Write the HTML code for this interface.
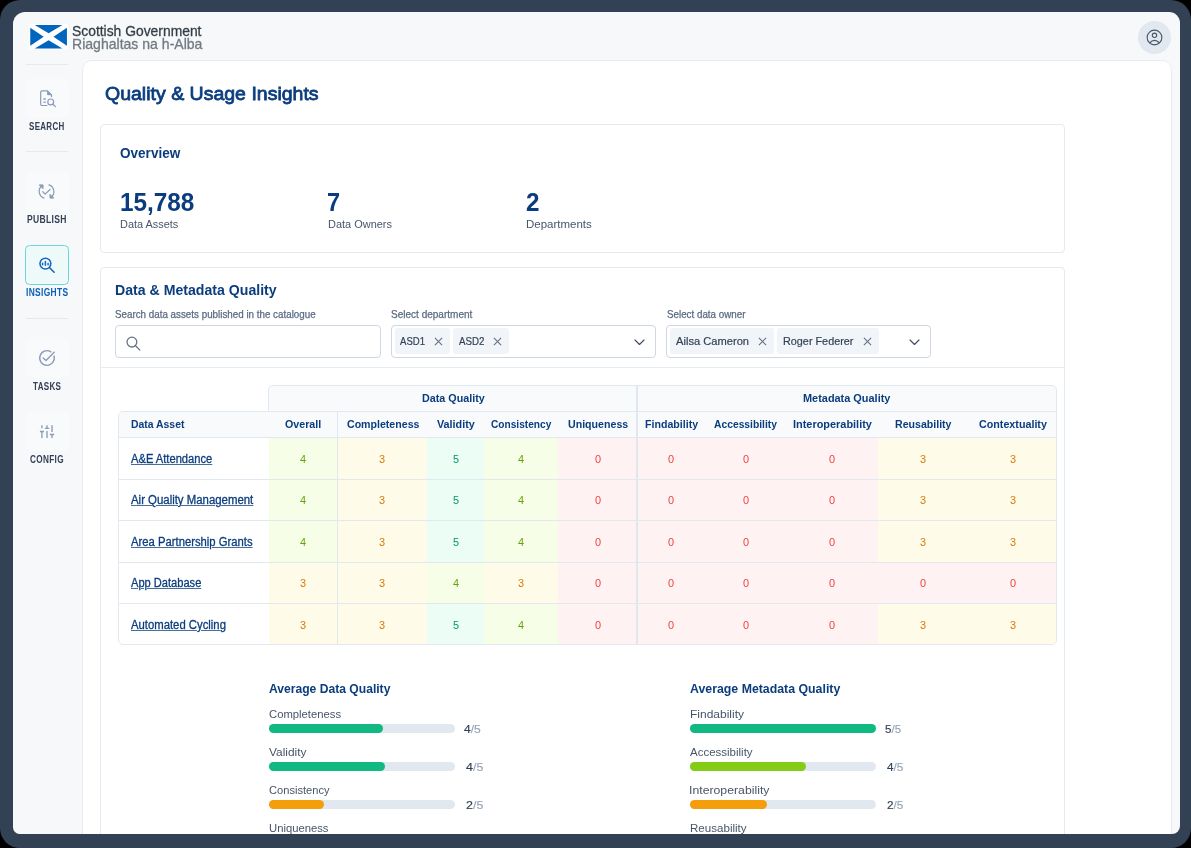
<!DOCTYPE html>
<html lang="en">
<head>
<meta charset="utf-8">
<title>Quality &amp; Usage Insights</title>
<style>
*{box-sizing:border-box;margin:0;padding:0}
html,body{width:1191px;height:848px;overflow:hidden;background:#000}
body{font-family:"Liberation Sans",sans-serif;color:#0b3d7e;position:relative}
.abs{position:absolute}
#frame{position:absolute;left:0;top:0;width:1191px;height:848px;background:#334155;border-radius:20px}
#app{position:absolute;left:13px;top:12px;width:1167px;height:822px;background:#f7f8fa;border-radius:12px 11px 8px 6.500px;overflow:hidden}
#c{position:absolute;left:-13px;top:-12px;width:1191px;height:848px;will-change:transform}
#main{position:absolute;left:82px;top:60px;width:1090px;height:800px;background:#fff;border:1px solid #e8ecf2;border-radius:10px}
.t{position:absolute;white-space:nowrap;line-height:1;transform-origin:0 0}
.card{position:absolute;border:1px solid #e5e9f0;border-radius:4px;background:#fff}
.inp{position:absolute;height:33px;border:1px solid #cfd7e2;border-radius:4px;background:#fff}
.chip{position:absolute;height:26px;background:#f1f5f9;border-radius:3px}
.nav{position:absolute;left:25.5px;width:43px;height:39px;border-radius:5px;background:#f9fafc}
.sep{position:absolute;left:26px;width:42px;height:1px;background:#e5e9ef}
.u{text-decoration:underline;text-underline-offset:1.2px;text-decoration-thickness:.8px;text-decoration-color:rgba(11,61,126,.75)}
.track{position:absolute;height:9px;border-radius:5px;background:#e2e8f0}
.fill{position:absolute;left:0;top:0;height:9px;border-radius:5px}
i{font-style:normal}
</style>
</head>
<body>
<div id="frame"></div>
<div id="app"><div id="c">
<svg class="abs" style="left:28.600px;top:24.200px" width="39.200" height="25.500" viewBox="0 0 40 25.500" preserveAspectRatio="none">
<rect width="40" height="25.500" fill="#fff"/>
<polygon points="5.9,1.1 34.100,1.1 20,9.300" fill="#0065bd"/>
<polygon points="5.9,24.400 34.100,24.400 20,16.200" fill="#0065bd"/>
<polygon points="1.3,3.800 1.300,21.700 15,12.750" fill="#0065bd"/>
<polygon points="38.700,3.800 38.700,21.700 25,12.750" fill="#0065bd"/>
</svg>
<div class="t" style="left:72.00px;top:24.00px;font-size:14.3px;color:#333e48;-webkit-text-stroke:0.3px currentColor;transform:scaleX(0.9699);">Scottish Government</div>
<div class="t" style="left:71.82px;top:37.00px;font-size:14.3px;color:#727a82;-webkit-text-stroke:0.3px currentColor;transform:scaleX(0.9827);">Riaghaltas na h-Alba</div>
<div class="abs" style="left:1138px;top:21.200px;width:32.600px;height:32.800px;border-radius:50%;background:#e2e8f0"></div>
<svg class="abs" style="left:1145.700px;top:29.200px" width="17" height="17" viewBox="0 0 17 17" fill="none" stroke="#475569" stroke-width="1.1">
<circle cx="8.5" cy="8.500" r="7.350"/><circle cx="8.5" cy="6.300" r="2.200"/><path d="M3.500 14Q8.500 8.800 13.500 14"/></svg>
<div class="sep" style="top:64px"></div>
<div class="nav" style="top:78.500px"></div>
<div class="sep" style="top:151px"></div>
<div class="nav" style="top:172px"></div>
<div class="nav" style="left:25.200px;top:245px;width:43.700px;height:40px;background:#eef9fa;border:1.500px solid #6fd3da;border-radius:4.500px"></div>
<div class="sep" style="top:318px"></div>
<div class="nav" style="top:339px"></div>
<div class="nav" style="top:412px"></div>
<div class="t" style="left:29.00px;top:122.00px;font-size:10px;font-weight:700;color:#334155;letter-spacing:0.4px;transform:scaleX(0.7976);">SEARCH</div>
<div class="t" style="left:27.40px;top:215.00px;font-size:10px;font-weight:700;color:#334155;letter-spacing:0.4px;transform:scaleX(0.8531);">PUBLISH</div>
<div class="t" style="left:26.00px;top:288.00px;font-size:10px;font-weight:700;color:#0b5fb8;letter-spacing:0.4px;transform:scaleX(0.8420);">INSIGHTS</div>
<div class="t" style="left:32.80px;top:382.00px;font-size:10px;font-weight:700;color:#334155;letter-spacing:0.4px;transform:scaleX(0.8039);">TASKS</div>
<div class="t" style="left:30.00px;top:455.00px;font-size:10px;font-weight:700;color:#334155;letter-spacing:0.4px;transform:scaleX(0.8198);">CONFIG</div>
<svg class="abs" style="left:38px;top:89px" width="19" height="19" viewBox="0 0 19 19" fill="none" stroke="#8b9bb4" stroke-width="1.2" stroke-linecap="round" stroke-linejoin="round">
<path d="M8.900 16.500H3.900a1.200 1.200 0 0 1-1.200-1.200V3a1.200 1.200 0 0 1 1.200-1.200h5.400l4.200 4.200v1.600"/><path d="M9.600 2.200v3.500h3.500z" fill="#8b9bb4" stroke-width="1"/>
<path d="M5.400 10h2.400M5.400 13.200h2.400" stroke-linecap="butt" stroke-width="1.300"/><circle cx="12.700" cy="12.900" r="2.900"/><path d="M14.900 15.100l2.400 2.400"/></svg>
<svg class="abs" style="left:37.150px;top:181.500px" width="19" height="19" viewBox="0 0 19 19" fill="none" stroke="#8b9bb4" stroke-width="1.2" stroke-linecap="round" stroke-linejoin="round">
<path d="M7 16.100A7.100 7.100 0 0 1 4.300 4.300"/><path d="M2.600 2.900h3.400v3.400z" fill="#8b9bb4" stroke-width="1"/><path d="M12 2.900a7.100 7.100 0 0 1 2.700 11.800"/><path d="M16.400 16.100H13v-3.400z" fill="#8b9bb4" stroke-width="1"/>
<path d="M5.700 9.700l2.500 2.400 4.800-4.600"/></svg>
<svg class="abs" style="left:37px;top:254.500px" width="20" height="20" viewBox="0 0 20 20" fill="none" stroke="#1565c0" stroke-width="1.550" stroke-linecap="round">
<circle cx="8.400" cy="8.600" r="5.450"/><path d="M12.600 12.700l4.500 4.500"/><path d="M5.600 8.300v1.500M8.400 6.600v3.600M11.100 8.600v1.200" stroke-width="1.500"/></svg>
<svg class="abs" style="left:37px;top:348px" width="20" height="20" viewBox="0 0 20 20" fill="none" stroke="#8b9bb4" stroke-width="1.350" stroke-linecap="round" stroke-linejoin="round">
<path d="M17.050 8.050A7.300 7.300 0 1 1 13.900 3.820"/><path d="M6.200 10l2.800 2.500 8.200-8.200"/></svg>
<svg class="abs" style="left:39px;top:424px" width="16" height="16" viewBox="0 0 16 16" fill="none" stroke="#8b9bb4" stroke-width="1.350" stroke-linecap="butt">
<path d="M2.900 1.300v3M.9 7.500h4.050M2.900 7.500v6.400M8 1.300v3M5.900 4.300h4.300M8 7.100v6.800M13 1.300v6.600M10.900 10.500h4.200M13 10.500v3.400"/></svg>
<div id="main"></div>
<div class="t" style="left:104.60px;top:84.00px;font-size:19.2px;-webkit-text-stroke:0.8px currentColor;transform:scaleX(1.0167);">Quality &amp; Usage Insights</div>
<div class="card" style="left:100px;top:124px;width:965px;height:129px"></div>
<div class="t" style="left:119.50px;top:146.00px;font-size:14.3px;font-weight:700;transform:scaleX(0.9479);">Overview</div>
<div class="t" style="left:119.83px;top:190.00px;font-size:25px;font-weight:700;transform:scaleX(0.9727);">15,788</div>
<div class="t" style="left:120.20px;top:218.00px;font-size:11.6px;color:#475569;transform:scaleX(0.9425);">Data Assets</div>
<div class="t" style="left:327.36px;top:190.00px;font-size:25px;font-weight:700;transform:scaleX(0.9417);">7</div>
<div class="t" style="left:328.30px;top:218.00px;font-size:11.6px;color:#475569;transform:scaleX(0.9461);">Data Owners</div>
<div class="t" style="left:526.00px;top:190.00px;font-size:25px;font-weight:700;transform:scaleX(0.9692);">2</div>
<div class="t" style="left:526.00px;top:218.00px;font-size:11.6px;color:#475569;transform:scaleX(0.9914);">Departments</div>
<div class="card" style="left:100px;top:267px;width:965px;height:600px"></div>
<div class="t" style="left:115.40px;top:283.00px;font-size:14.3px;font-weight:700;transform:scaleX(0.9877);">Data &amp; Metadata Quality</div>
<div class="t" style="left:115.40px;top:310.00px;font-size:10.3px;color:#5b6b80;-webkit-text-stroke:0.25px currentColor;transform:scaleX(0.9524);">Search data assets published in the catalogue</div>
<div class="t" style="left:391.20px;top:310.00px;font-size:10.3px;color:#5b6b80;-webkit-text-stroke:0.25px currentColor;transform:scaleX(0.9736);">Select department</div>
<div class="t" style="left:666.70px;top:310.00px;font-size:10.3px;color:#5b6b80;-webkit-text-stroke:0.25px currentColor;transform:scaleX(0.9518);">Select data owner</div>
<div class="inp" style="left:115px;top:325px;width:265.500px"><svg class="abs" style="left:10px;top:9.700px" width="16" height="16" viewBox="0 0 16 16" fill="none" stroke="#64748b" stroke-width="1.3" stroke-linecap="round"><circle cx="5.900" cy="6.100" r="4.900"/><path d="M9.500 9.700l4.400 4.400"/></svg></div>
<div class="inp" style="left:390.700px;top:325px;width:265.300px"></div>
<div class="inp" style="left:666.200px;top:325px;width:265.300px"></div>
<div class="chip" style="left:394.8px;top:328px;width:54.9px"></div>
<div class="t" style="left:400.10px;top:336.00px;font-size:11.8px;color:#334155;-webkit-text-stroke:0.2px currentColor;transform:scaleX(0.8131);">ASD1</div>
<svg class="abs" style="left:433.9px;top:336.8px" width="9" height="9" viewBox="0 0 9 9" stroke="#64748b" stroke-width="1.150" fill="none"><path d="M.9.900l7.200 7.200M8.100.9l-7.200 7.200"/></svg>
<div class="chip" style="left:453px;top:328px;width:55.8px"></div>
<div class="t" style="left:458.50px;top:336.00px;font-size:11.8px;color:#334155;-webkit-text-stroke:0.2px currentColor;transform:scaleX(0.8263);">ASD2</div>
<svg class="abs" style="left:493.2px;top:336.8px" width="9" height="9" viewBox="0 0 9 9" stroke="#64748b" stroke-width="1.150" fill="none"><path d="M.9.900l7.200 7.200M8.100.9l-7.200 7.200"/></svg>
<div class="chip" style="left:670.2px;top:328px;width:103.8px"></div>
<div class="t" style="left:675.70px;top:336.00px;font-size:11.8px;color:#334155;-webkit-text-stroke:0.2px currentColor;transform:scaleX(0.9440);">Ailsa Cameron</div>
<svg class="abs" style="left:757.9px;top:336.8px" width="9" height="9" viewBox="0 0 9 9" stroke="#64748b" stroke-width="1.150" fill="none"><path d="M.9.900l7.200 7.200M8.100.9l-7.200 7.200"/></svg>
<div class="chip" style="left:777.2px;top:328px;width:102.0px"></div>
<div class="t" style="left:783.00px;top:336.00px;font-size:11.8px;color:#334155;-webkit-text-stroke:0.2px currentColor;transform:scaleX(0.9181);">Roger Federer</div>
<svg class="abs" style="left:863.2px;top:336.8px" width="9" height="9" viewBox="0 0 9 9" stroke="#64748b" stroke-width="1.150" fill="none"><path d="M.9.900l7.200 7.200M8.100.9l-7.200 7.200"/></svg>
<svg class="abs" style="left:633.5px;top:338.5px" width="11" height="7" viewBox="0 0 11 7" fill="none" stroke="#3f4d63" stroke-width="1.150" stroke-linecap="round" stroke-linejoin="round"><path d="M1 1l4.500 4.500L10 1"/></svg>
<svg class="abs" style="left:909.2px;top:338.5px" width="11" height="7" viewBox="0 0 11 7" fill="none" stroke="#3f4d63" stroke-width="1.150" stroke-linecap="round" stroke-linejoin="round"><path d="M1 1l4.500 4.500L10 1"/></svg>
<div class="abs" style="left:101px;top:367px;width:963px;height:1px;background:#e8ecf2"></div>
<div class="abs" style="left:268px;top:385px;width:789px;height:60px;background:#f8fafc;border:1px solid #e2e8f0;border-radius:5px 5px 0 0"></div>
<div class="abs" style="left:118px;top:411px;width:939px;height:234px;background:#fff;border:1px solid #e2e8f0;border-radius:5px 0 5px 5px;overflow:hidden" id="tb">
<div class="abs" style="left:0;top:0;width:940px;height:25.5px;background:#f8fafc"></div>
<div class="abs" style="left:149.5px;top:25.5px;width:69.0px;height:41.5px;background:#f7fee7"></div>
<div class="abs" style="left:218.5px;top:25.5px;width:89.5px;height:41.5px;background:#fefce8"></div>
<div class="abs" style="left:308px;top:25.5px;width:57px;height:41.5px;background:#ecfdf5"></div>
<div class="abs" style="left:365px;top:25.5px;width:73.5px;height:41.5px;background:#f7fee7"></div>
<div class="abs" style="left:438.5px;top:25.5px;width:79.5px;height:41.5px;background:#fef2f2"></div>
<div class="abs" style="left:518px;top:25.5px;width:67.5px;height:41.5px;background:#fef2f2"></div>
<div class="abs" style="left:585.5px;top:25.5px;width:82.0px;height:41.5px;background:#fef2f2"></div>
<div class="abs" style="left:667.5px;top:25.5px;width:91.0px;height:41.5px;background:#fef2f2"></div>
<div class="abs" style="left:758.5px;top:25.5px;width:91.5px;height:41.5px;background:#fefce8"></div>
<div class="abs" style="left:850px;top:25.5px;width:87.5px;height:41.5px;background:#fefce8"></div>
<div class="abs" style="left:149.5px;top:67px;width:69.0px;height:41.5px;background:#f7fee7"></div>
<div class="abs" style="left:218.5px;top:67px;width:89.5px;height:41.5px;background:#fefce8"></div>
<div class="abs" style="left:308px;top:67px;width:57px;height:41.5px;background:#ecfdf5"></div>
<div class="abs" style="left:365px;top:67px;width:73.5px;height:41.5px;background:#f7fee7"></div>
<div class="abs" style="left:438.5px;top:67px;width:79.5px;height:41.5px;background:#fef2f2"></div>
<div class="abs" style="left:518px;top:67px;width:67.5px;height:41.5px;background:#fef2f2"></div>
<div class="abs" style="left:585.5px;top:67px;width:82.0px;height:41.5px;background:#fef2f2"></div>
<div class="abs" style="left:667.5px;top:67px;width:91.0px;height:41.5px;background:#fef2f2"></div>
<div class="abs" style="left:758.5px;top:67px;width:91.5px;height:41.5px;background:#fefce8"></div>
<div class="abs" style="left:850px;top:67px;width:87.5px;height:41.5px;background:#fefce8"></div>
<div class="abs" style="left:149.5px;top:108.5px;width:69.0px;height:41.5px;background:#f7fee7"></div>
<div class="abs" style="left:218.5px;top:108.5px;width:89.5px;height:41.5px;background:#fefce8"></div>
<div class="abs" style="left:308px;top:108.5px;width:57px;height:41.5px;background:#ecfdf5"></div>
<div class="abs" style="left:365px;top:108.5px;width:73.5px;height:41.5px;background:#f7fee7"></div>
<div class="abs" style="left:438.5px;top:108.5px;width:79.5px;height:41.5px;background:#fef2f2"></div>
<div class="abs" style="left:518px;top:108.5px;width:67.5px;height:41.5px;background:#fef2f2"></div>
<div class="abs" style="left:585.5px;top:108.5px;width:82.0px;height:41.5px;background:#fef2f2"></div>
<div class="abs" style="left:667.5px;top:108.5px;width:91.0px;height:41.5px;background:#fef2f2"></div>
<div class="abs" style="left:758.5px;top:108.5px;width:91.5px;height:41.5px;background:#fefce8"></div>
<div class="abs" style="left:850px;top:108.5px;width:87.5px;height:41.5px;background:#fefce8"></div>
<div class="abs" style="left:149.5px;top:150px;width:69.0px;height:41px;background:#fefce8"></div>
<div class="abs" style="left:218.5px;top:150px;width:89.5px;height:41px;background:#fefce8"></div>
<div class="abs" style="left:308px;top:150px;width:57px;height:41px;background:#f7fee7"></div>
<div class="abs" style="left:365px;top:150px;width:73.5px;height:41px;background:#fefce8"></div>
<div class="abs" style="left:438.5px;top:150px;width:79.5px;height:41px;background:#fef2f2"></div>
<div class="abs" style="left:518px;top:150px;width:67.5px;height:41px;background:#fef2f2"></div>
<div class="abs" style="left:585.5px;top:150px;width:82.0px;height:41px;background:#fef2f2"></div>
<div class="abs" style="left:667.5px;top:150px;width:91.0px;height:41px;background:#fef2f2"></div>
<div class="abs" style="left:758.5px;top:150px;width:91.5px;height:41px;background:#fef2f2"></div>
<div class="abs" style="left:850px;top:150px;width:87.5px;height:41px;background:#fef2f2"></div>
<div class="abs" style="left:149.5px;top:191px;width:69.0px;height:41.5px;background:#fefce8"></div>
<div class="abs" style="left:218.5px;top:191px;width:89.5px;height:41.5px;background:#fefce8"></div>
<div class="abs" style="left:308px;top:191px;width:57px;height:41.5px;background:#ecfdf5"></div>
<div class="abs" style="left:365px;top:191px;width:73.5px;height:41.5px;background:#f7fee7"></div>
<div class="abs" style="left:438.5px;top:191px;width:79.5px;height:41.5px;background:#fef2f2"></div>
<div class="abs" style="left:518px;top:191px;width:67.5px;height:41.5px;background:#fef2f2"></div>
<div class="abs" style="left:585.5px;top:191px;width:82.0px;height:41.5px;background:#fef2f2"></div>
<div class="abs" style="left:667.5px;top:191px;width:91.0px;height:41.5px;background:#fef2f2"></div>
<div class="abs" style="left:758.5px;top:191px;width:91.5px;height:41.5px;background:#fefce8"></div>
<div class="abs" style="left:850px;top:191px;width:87.5px;height:41.5px;background:#fefce8"></div>
<div class="abs" style="left:0;top:25.0px;width:940px;height:1px;background:#e2e8f0"></div>
<div class="abs" style="left:0;top:66.5px;width:940px;height:1px;background:#e2e8f0"></div>
<div class="abs" style="left:0;top:108.0px;width:940px;height:1px;background:#e2e8f0"></div>
<div class="abs" style="left:0;top:149.5px;width:940px;height:1px;background:#e2e8f0"></div>
<div class="abs" style="left:0;top:190.5px;width:940px;height:1px;background:#e2e8f0"></div>
<div class="abs" style="left:218px;top:0;width:1px;height:240px;background:#e2e8f0"></div>
<div class="abs" style="left:517px;top:-5px;width:2.200px;height:245px;background:#e0e7f0"></div>
</div>
<div class="abs" style="left:268.500px;top:411px;width:788px;height:1px;background:#e2e8f0"></div>
<div class="abs" style="left:636px;top:386px;width:2.200px;height:26px;background:#e0e7f0"></div>
<div class="t" style="left:421.80px;top:392.00px;font-size:11.6px;font-weight:700;transform:scaleX(0.9267);">Data Quality</div>
<div class="t" style="left:802.90px;top:392.00px;font-size:11.6px;font-weight:700;transform:scaleX(0.9419);">Metadata Quality</div>
<div class="t" style="left:131.00px;top:418.00px;font-size:11.6px;font-weight:700;transform:scaleX(0.8973);">Data Asset</div>
<div class="t" style="left:285.20px;top:418.00px;font-size:11.6px;font-weight:700;transform:scaleX(0.9208);">Overall</div>
<div class="t" style="left:346.50px;top:418.00px;font-size:11.6px;font-weight:700;transform:scaleX(0.9137);">Completeness</div>
<div class="t" style="left:436.75px;top:418.00px;font-size:11.6px;font-weight:700;transform:scaleX(0.9308);">Validity</div>
<div class="t" style="left:490.70px;top:418.00px;font-size:11.6px;font-weight:700;transform:scaleX(0.8749);">Consistency</div>
<div class="t" style="left:568.30px;top:418.00px;font-size:11.6px;font-weight:700;transform:scaleX(0.9163);">Uniqueness</div>
<div class="t" style="left:644.50px;top:418.00px;font-size:11.6px;font-weight:700;transform:scaleX(0.9159);">Findability</div>
<div class="t" style="left:714.25px;top:418.00px;font-size:11.6px;font-weight:700;transform:scaleX(0.8889);">Accessibility</div>
<div class="t" style="left:792.80px;top:418.00px;font-size:11.6px;font-weight:700;transform:scaleX(0.9419);">Interoperability</div>
<div class="t" style="left:894.80px;top:418.00px;font-size:11.6px;font-weight:700;transform:scaleX(0.9134);">Reusability</div>
<div class="t" style="left:978.60px;top:418.00px;font-size:11.6px;font-weight:700;transform:scaleX(0.9245);">Contextuality</div>
<div class="t u" style="left:130.80px;top:453.00px;font-size:12px;-webkit-text-stroke:0.3px currentColor;transform:scaleX(0.9300);">A&amp;E Attendance</div>
<div class="t" style="left:300.16px;top:454.00px;font-size:11.5px;color:#65a30d;transform:scaleX(0.9500);">4</div>
<div class="t" style="left:379.46px;top:454.00px;font-size:11.5px;color:#d97706;transform:scaleX(0.9500);">3</div>
<div class="t" style="left:452.86px;top:454.00px;font-size:11.5px;color:#059669;transform:scaleX(0.9500);">5</div>
<div class="t" style="left:518.06px;top:454.00px;font-size:11.5px;color:#65a30d;transform:scaleX(0.9500);">4</div>
<div class="t" style="left:595.16px;top:454.00px;font-size:11.5px;color:#ef4444;transform:scaleX(0.9500);">0</div>
<div class="t" style="left:668.26px;top:454.00px;font-size:11.5px;color:#ef4444;transform:scaleX(0.9500);">0</div>
<div class="t" style="left:742.96px;top:454.00px;font-size:11.5px;color:#ef4444;transform:scaleX(0.9500);">0</div>
<div class="t" style="left:829.46px;top:454.00px;font-size:11.5px;color:#ef4444;transform:scaleX(0.9500);">0</div>
<div class="t" style="left:920.26px;top:454.00px;font-size:11.5px;color:#d97706;transform:scaleX(0.9500);">3</div>
<div class="t" style="left:1009.76px;top:454.00px;font-size:11.5px;color:#d97706;transform:scaleX(0.9500);">3</div>
<div class="t u" style="left:130.80px;top:494.00px;font-size:12px;-webkit-text-stroke:0.3px currentColor;transform:scaleX(0.9498);">Air Quality Management</div>
<div class="t" style="left:300.16px;top:495.00px;font-size:11.5px;color:#65a30d;transform:scaleX(0.9500);">4</div>
<div class="t" style="left:379.46px;top:495.00px;font-size:11.5px;color:#d97706;transform:scaleX(0.9500);">3</div>
<div class="t" style="left:452.86px;top:495.00px;font-size:11.5px;color:#059669;transform:scaleX(0.9500);">5</div>
<div class="t" style="left:518.06px;top:495.00px;font-size:11.5px;color:#65a30d;transform:scaleX(0.9500);">4</div>
<div class="t" style="left:595.16px;top:495.00px;font-size:11.5px;color:#ef4444;transform:scaleX(0.9500);">0</div>
<div class="t" style="left:668.26px;top:495.00px;font-size:11.5px;color:#ef4444;transform:scaleX(0.9500);">0</div>
<div class="t" style="left:742.96px;top:495.00px;font-size:11.5px;color:#ef4444;transform:scaleX(0.9500);">0</div>
<div class="t" style="left:829.46px;top:495.00px;font-size:11.5px;color:#ef4444;transform:scaleX(0.9500);">0</div>
<div class="t" style="left:920.26px;top:495.00px;font-size:11.5px;color:#d97706;transform:scaleX(0.9500);">3</div>
<div class="t" style="left:1009.76px;top:495.00px;font-size:11.5px;color:#d97706;transform:scaleX(0.9500);">3</div>
<div class="t u" style="left:130.80px;top:536.00px;font-size:12px;-webkit-text-stroke:0.3px currentColor;transform:scaleX(0.9398);">Area Partnership Grants</div>
<div class="t" style="left:300.16px;top:537.00px;font-size:11.5px;color:#65a30d;transform:scaleX(0.9500);">4</div>
<div class="t" style="left:379.46px;top:537.00px;font-size:11.5px;color:#d97706;transform:scaleX(0.9500);">3</div>
<div class="t" style="left:452.86px;top:537.00px;font-size:11.5px;color:#059669;transform:scaleX(0.9500);">5</div>
<div class="t" style="left:518.06px;top:537.00px;font-size:11.5px;color:#65a30d;transform:scaleX(0.9500);">4</div>
<div class="t" style="left:595.16px;top:537.00px;font-size:11.5px;color:#ef4444;transform:scaleX(0.9500);">0</div>
<div class="t" style="left:668.26px;top:537.00px;font-size:11.5px;color:#ef4444;transform:scaleX(0.9500);">0</div>
<div class="t" style="left:742.96px;top:537.00px;font-size:11.5px;color:#ef4444;transform:scaleX(0.9500);">0</div>
<div class="t" style="left:829.46px;top:537.00px;font-size:11.5px;color:#ef4444;transform:scaleX(0.9500);">0</div>
<div class="t" style="left:920.26px;top:537.00px;font-size:11.5px;color:#d97706;transform:scaleX(0.9500);">3</div>
<div class="t" style="left:1009.76px;top:537.00px;font-size:11.5px;color:#d97706;transform:scaleX(0.9500);">3</div>
<div class="t u" style="left:130.80px;top:577.00px;font-size:12px;-webkit-text-stroke:0.3px currentColor;transform:scaleX(0.9243);">App Database</div>
<div class="t" style="left:300.16px;top:578.00px;font-size:11.5px;color:#d97706;transform:scaleX(0.9500);">3</div>
<div class="t" style="left:379.46px;top:578.00px;font-size:11.5px;color:#d97706;transform:scaleX(0.9500);">3</div>
<div class="t" style="left:452.86px;top:578.00px;font-size:11.5px;color:#65a30d;transform:scaleX(0.9500);">4</div>
<div class="t" style="left:518.06px;top:578.00px;font-size:11.5px;color:#d97706;transform:scaleX(0.9500);">3</div>
<div class="t" style="left:595.16px;top:578.00px;font-size:11.5px;color:#ef4444;transform:scaleX(0.9500);">0</div>
<div class="t" style="left:668.26px;top:578.00px;font-size:11.5px;color:#ef4444;transform:scaleX(0.9500);">0</div>
<div class="t" style="left:742.96px;top:578.00px;font-size:11.5px;color:#ef4444;transform:scaleX(0.9500);">0</div>
<div class="t" style="left:829.46px;top:578.00px;font-size:11.5px;color:#ef4444;transform:scaleX(0.9500);">0</div>
<div class="t" style="left:920.26px;top:578.00px;font-size:11.5px;color:#ef4444;transform:scaleX(0.9500);">0</div>
<div class="t" style="left:1009.76px;top:578.00px;font-size:11.5px;color:#ef4444;transform:scaleX(0.9500);">0</div>
<div class="t u" style="left:130.80px;top:619.00px;font-size:12px;-webkit-text-stroke:0.3px currentColor;transform:scaleX(0.9426);">Automated Cycling</div>
<div class="t" style="left:300.16px;top:620.00px;font-size:11.5px;color:#d97706;transform:scaleX(0.9500);">3</div>
<div class="t" style="left:379.46px;top:620.00px;font-size:11.5px;color:#d97706;transform:scaleX(0.9500);">3</div>
<div class="t" style="left:452.86px;top:620.00px;font-size:11.5px;color:#059669;transform:scaleX(0.9500);">5</div>
<div class="t" style="left:518.06px;top:620.00px;font-size:11.5px;color:#65a30d;transform:scaleX(0.9500);">4</div>
<div class="t" style="left:595.16px;top:620.00px;font-size:11.5px;color:#ef4444;transform:scaleX(0.9500);">0</div>
<div class="t" style="left:668.26px;top:620.00px;font-size:11.5px;color:#ef4444;transform:scaleX(0.9500);">0</div>
<div class="t" style="left:742.96px;top:620.00px;font-size:11.5px;color:#ef4444;transform:scaleX(0.9500);">0</div>
<div class="t" style="left:829.46px;top:620.00px;font-size:11.5px;color:#ef4444;transform:scaleX(0.9500);">0</div>
<div class="t" style="left:920.26px;top:620.00px;font-size:11.5px;color:#d97706;transform:scaleX(0.9500);">3</div>
<div class="t" style="left:1009.76px;top:620.00px;font-size:11.5px;color:#d97706;transform:scaleX(0.9500);">3</div>
<div class="t" style="left:269.20px;top:682.00px;font-size:13.2px;font-weight:700;transform:scaleX(0.9184);">Average Data Quality</div>
<div class="t" style="left:269.30px;top:709.00px;font-size:11.8px;color:#475569;transform:scaleX(0.9562);">Completeness</div>
<div class="track" style="left:269px;top:724.4px;width:186px"><div class="fill" style="width:114px;background:#10b981"></div></div>
<div class="t" style="left:463.60px;top:724.00px;font-size:11.8px;color:#334155;-webkit-text-stroke:0.15px currentColor;transform:scaleX(1.0215);">4<i style="color:#94a3b8">/5</i></div>
<div class="t" style="left:269.30px;top:747.00px;font-size:11.8px;color:#475569;transform:scaleX(1.0066);">Validity</div>
<div class="track" style="left:269px;top:762.4px;width:186px"><div class="fill" style="width:116px;background:#10b981"></div></div>
<div class="t" style="left:466.10px;top:762.00px;font-size:11.8px;color:#334155;-webkit-text-stroke:0.15px currentColor;transform:scaleX(1.0571);">4<i style="color:#94a3b8">/5</i></div>
<div class="t" style="left:269.30px;top:785.00px;font-size:11.8px;color:#475569;transform:scaleX(0.9416);">Consistency</div>
<div class="track" style="left:269px;top:800.4px;width:186px"><div class="fill" style="width:54.5px;background:#f59e0b"></div></div>
<div class="t" style="left:466.10px;top:800.00px;font-size:11.8px;color:#334155;-webkit-text-stroke:0.15px currentColor;transform:scaleX(1.0571);">2<i style="color:#94a3b8">/5</i></div>
<div class="t" style="left:269.30px;top:823.00px;font-size:11.8px;color:#475569;transform:scaleX(0.9551);">Uniqueness</div>
<div class="t" style="left:689.70px;top:682.00px;font-size:13.2px;font-weight:700;transform:scaleX(0.9349);">Average Metadata Quality</div>
<div class="t" style="left:689.80px;top:709.00px;font-size:11.8px;color:#475569;transform:scaleX(1.0167);">Findability</div>
<div class="track" style="left:689.5px;top:724.4px;width:186px"><div class="fill" style="width:186px;background:#10b981"></div></div>
<div class="t" style="left:884.50px;top:724.00px;font-size:11.8px;color:#334155;-webkit-text-stroke:0.15px currentColor;transform:scaleX(0.9799);">5<i style="color:#94a3b8">/5</i></div>
<div class="t" style="left:689.80px;top:747.00px;font-size:11.8px;color:#475569;transform:scaleX(0.9744);">Accessibility</div>
<div class="track" style="left:689.5px;top:762.4px;width:186px"><div class="fill" style="width:116px;background:#84cc16"></div></div>
<div class="t" style="left:887.00px;top:762.00px;font-size:11.8px;color:#334155;-webkit-text-stroke:0.15px currentColor;transform:scaleX(0.9918);">4<i style="color:#94a3b8">/5</i></div>
<div class="t" style="left:688.76px;top:785.00px;font-size:11.8px;color:#475569;transform:scaleX(1.0395);">Interoperability</div>
<div class="track" style="left:689.5px;top:800.4px;width:186px"><div class="fill" style="width:77px;background:#f59e0b"></div></div>
<div class="t" style="left:887.00px;top:800.00px;font-size:11.8px;color:#334155;-webkit-text-stroke:0.15px currentColor;transform:scaleX(0.9918);">2<i style="color:#94a3b8">/5</i></div>
<div class="t" style="left:689.80px;top:823.00px;font-size:11.8px;color:#475569;transform:scaleX(0.9809);">Reusability</div>
</div></div>
</body>
</html>
